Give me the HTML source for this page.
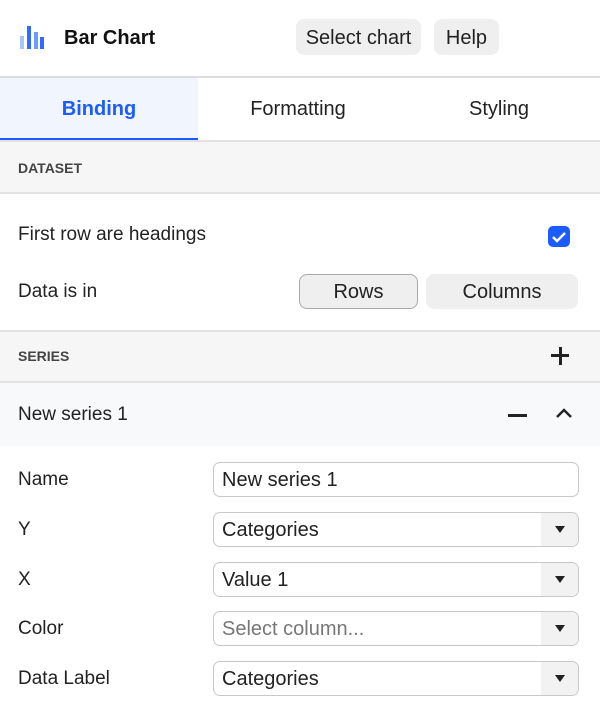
<!DOCTYPE html>
<html><head><style>
*{margin:0;padding:0;box-sizing:border-box}
body{width:600px;height:710px;background:#fff;font-family:"Liberation Sans",Arial,sans-serif;color:#222;position:relative;overflow:hidden}
.a{position:absolute}
.btn{position:absolute;background:#efefef;border-radius:8px;font-size:20px;text-align:center;color:#222}
.lbl{position:absolute;left:18px;font-size:19px;color:#222}
.inp{position:absolute;left:213px;width:366px;height:35px;border:1.5px solid #c8c8c8;border-radius:7px;font-size:20px;padding-left:8px;line-height:34px;overflow:hidden;background:#fff}
.dd:after{content:"";position:absolute;right:0;top:0;width:37px;height:100%;background:#f2f2f2}
.dd span.ar{position:absolute;right:13px;top:13px;width:0;height:0;border-left:5px solid transparent;border-right:5px solid transparent;border-top:7px solid #222;z-index:2}
.hdr{position:absolute;left:0;width:600px;background:#f6f6f6;border-top:2px solid #e2e2e2;border-bottom:2px solid #e2e2e2}
.ht{position:absolute;left:18px;font-size:14px;font-weight:bold;color:#444}
</style></head><body>
<svg class="a" style="left:20px;top:24px" width="24" height="26"><rect x="0" y="12" width="4" height="13" fill="#a9c4fb"/><rect x="7" y="2" width="4" height="23" fill="#2f6bff"/><rect x="14" y="8" width="4" height="17" fill="#6f9bff"/><rect x="20" y="13" width="4" height="12" fill="#2f6bff"/></svg>
<div class="a" style="left:64px;top:27px;font-size:20px;font-weight:bold;color:#111">Bar Chart</div>
<div class="btn" style="left:296px;top:19px;width:125px;height:36px;line-height:38px">Select chart</div>
<div class="btn" style="left:434px;top:19px;width:65px;height:36px;line-height:38px">Help</div>
<div class="a" style="left:0;top:76px;width:600px;height:2px;background:#dcdcdc"></div>
<div class="a" style="left:0;top:78px;width:198px;height:62px;background:#f1f5fe;border-bottom:2px solid #1a5cff"></div>
<div class="a" style="left:0;top:98px;width:198px;text-align:center;font-size:20px;font-weight:bold;color:#1a5cff">Binding</div>
<div class="a" style="left:198px;top:98px;width:200px;text-align:center;font-size:20px">Formatting</div>
<div class="a" style="left:398px;top:98px;width:202px;text-align:center;font-size:20px">Styling</div>
<div class="hdr" style="top:140px;height:54px"><div class="ht" style="top:18px">DATASET</div></div>
<div class="lbl" style="top:224px">First row are headings</div>
<div class="a" style="left:548px;top:226px;width:22px;height:21px;background:#1a5cff;border-radius:5px"><svg width="22" height="21"><path d="M5 11l4 4 8-8" stroke="#fff" stroke-width="2.4" fill="none"/></svg></div>
<div class="lbl" style="top:281px">Data is in</div>
<div class="btn" style="left:299px;top:274px;width:119px;height:35px;line-height:34px;border:1.5px solid #a8a8a8;font-size:20px">Rows</div>
<div class="btn" style="left:426px;top:274px;width:152px;height:35px;line-height:37px">Columns</div>
<div class="hdr" style="top:330px;height:53px"><div class="ht" style="top:16px">SERIES</div>
<div class="a" style="left:551px;top:15px;width:18px;height:18px"><div class="a" style="left:0;top:7px;width:18px;height:3px;background:#222"></div><div class="a" style="left:7.5px;top:0;width:3px;height:18px;background:#222"></div></div></div>
<div class="a" style="left:0;top:383px;width:600px;height:63px;background:#f8f9fb"></div>
<div class="lbl" style="top:404px">New series 1</div>
<div class="a" style="left:508px;top:414px;width:19px;height:3px;background:#222"></div>
<svg class="a" style="left:554px;top:406px" width="20" height="14"><path d="M3 11l7-7 7 7" stroke="#222" stroke-width="2.4" fill="none"/></svg>
<div class="lbl" style="top:469px">Name</div>
<div class="inp" style="top:462px">New series 1</div>
<div class="lbl" style="top:519px">Y</div>
<div class="inp dd" style="top:512px">Categories<span class="ar"></span></div>
<div class="lbl" style="top:569px">X</div>
<div class="inp dd" style="top:562px">Value 1<span class="ar"></span></div>
<div class="lbl" style="top:618px">Color</div>
<div class="inp dd" style="top:611px;color:#777">Select column...<span class="ar"></span></div>
<div class="lbl" style="top:668px">Data Label</div>
<div class="inp dd" style="top:661px">Categories<span class="ar"></span></div>
</body></html>
